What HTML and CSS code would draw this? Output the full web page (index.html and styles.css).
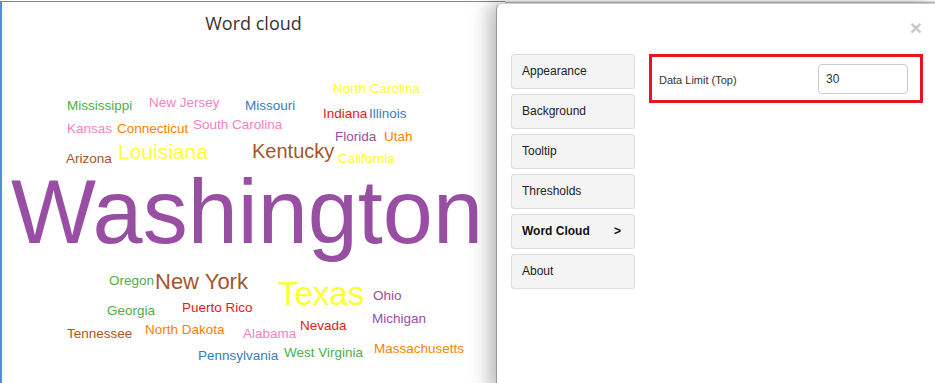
FILE: index.html
```html
<!DOCTYPE html>
<html lang="en">
<head>
    <meta charset="UTF-8">
    <meta name="viewport" content="width=device-width, initial-scale=1.0">
    <title>Word cloud settings</title>
    <link rel="stylesheet" href="styles.css">
</head>
<body>
    <div class="dashboard">
        <div class="chart-widget">
            <div class="chart-title">Word cloud</div>
            <div class="cloud">
                <span class="word yellow" style="left:331px;top:80px">North Carolina</span>
                <span class="word green" style="left:65px;top:97px">Mississippi</span>
                <span class="word pink" style="left:147px;top:94px">New Jersey</span>
                <span class="word blue" style="left:243px;top:97px">Missouri</span>
                <span class="word red" style="left:321px;top:105px">Indiana</span>
                <span class="word blue" style="left:367px;top:105px">Illinois</span>
                <span class="word pink" style="left:65px;top:120px">Kansas</span>
                <span class="word orange" style="left:115px;top:120px">Connecticut</span>
                <span class="word pink" style="left:191px;top:116px">South Carolina</span>
                <span class="word purple" style="left:333px;top:128px">Florida</span>
                <span class="word orange" style="left:382px;top:128px">Utah</span>
                <span class="word brown" style="left:64px;top:150px">Arizona</span>
                <span class="word yellow" style="left:116px;top:139px;font-size:21px">Louisiana</span>
                <span class="word brown" style="left:250px;top:139px;font-size:20px">Kentucky</span>
                <span class="word yellow" style="left:336px;top:150px">California</span>
                <span class="word purple" style="left:9px;top:165px;font-size:90px">Washington</span>
                <span class="word green" style="left:107px;top:272px">Oregon</span>
                <span class="word brown" style="left:153px;top:269px;font-size:22px">New York</span>
                <span class="word yellow" style="left:276px;top:275px;font-size:33px">Texas</span>
                <span class="word purple" style="left:371px;top:287px">Ohio</span>
                <span class="word green" style="left:105px;top:302px">Georgia</span>
                <span class="word red" style="left:180px;top:299px">Puerto Rico</span>
                <span class="word purple" style="left:370px;top:310px">Michigan</span>
                <span class="word brown" style="left:65px;top:325px">Tennessee</span>
                <span class="word orange" style="left:143px;top:321px">North Dakota</span>
                <span class="word pink" style="left:241px;top:325px">Alabama</span>
                <span class="word red" style="left:298px;top:317px">Nevada</span>
                <span class="word blue" style="left:196px;top:347px">Pennsylvania</span>
                <span class="word green" style="left:282px;top:344px">West Virginia</span>
                <span class="word orange" style="left:372px;top:340px">Massachusetts</span>
            </div>
        </div>
        <div class="next-widget">
            <div class="next-axis"></div>
        </div>
    </div>

    <div class="settings-panel">
        <div class="panel-header">
            <button class="close-btn">&times;</button>
        </div>
        <div class="panel-body">
            <div class="menu">
                <button class="menu-item">Appearance</button>
                <button class="menu-item">Background</button>
                <button class="menu-item">Tooltip</button>
                <button class="menu-item">Thresholds</button>
                <button class="menu-item active">Word Cloud <span class="arrow">&gt;</span></button>
                <button class="menu-item">About</button>
            </div>
            <div class="options">
                <div class="option-row">
                    <label class="option-label" for="dataLimit">Data Limit (Top)</label>
                    <input class="option-input" type="text" id="dataLimit" value="30">
                </div>
            </div>
        </div>
    </div>
</body>
</html>
```

FILE: styles.css
```css
body {
    font-family: 'Liberation Sans', Arial, sans-serif;
    margin: 0;
    padding: 0;
    background-color: white;
    overflow: hidden;
    height: 383px;
}

.dashboard {
    display: flex;
    margin-top: 1px;
    height: 382px;
}

.chart-widget {
    position: relative;
    width: 503px;
    border-top: 1px solid #4a90e2;
    border-left: 2px solid #4a90e2;
    background-color: white;
}

.chart-title {
    padding-top: 12px;
    font-family: 'Open Sans', sans-serif;
    font-size: 18px;
    line-height: 18px;
    color: #333;
    text-align: center;
}

.cloud {
    position: absolute;
    top: 0;
    left: 0;
    right: 0;
    bottom: 0;
}

.word {
    position: absolute;
    font-size: 13.5px;
    line-height: 1;
    white-space: nowrap;
}

.purple { color: #984ea3; }
.yellow { color: #ffff33; }
.brown { color: #a65628; }
.pink { color: #f781bf; }
.green { color: #4daf4a; }
.blue { color: #377eb8; }
.red { color: #e41a1c; }
.orange { color: #ff7f00; }

.next-widget {
    flex: 1;
}

.next-axis {
    height: 1px;
    background-color: #e8e8e8;
    border-bottom: 1px solid #bbb;
}

.settings-panel {
    position: absolute;
    top: 3px;
    left: 496px;
    right: 0;
    bottom: -10px;
    background-color: white;
    border-left: 1px solid #999;
    border-top: 1px solid #ccc;
    border-top-left-radius: 6px;
    box-shadow: -6px 0 20px rgba(0,0,0,0.3);
    padding: 0 12px 0 14px;
}

.panel-header {
    height: 50px;
    display: flex;
    justify-content: flex-end;
    align-items: flex-start;
}

.close-btn {
    margin-top: 13px;
    margin-right: 1px;
    padding: 0;
    border: none;
    background: none;
    font-family: 'Liberation Sans', Arial, sans-serif;
    font-size: 21px;
    font-weight: bold;
    line-height: 1;
    color: #c8c8c8;
    cursor: pointer;
}

.panel-body {
    display: flex;
    gap: 14px;
    align-items: flex-start;
}

.menu {
    width: 124px;
    display: flex;
    flex-direction: column;
    gap: 5px;
}

.menu-item {
    display: flex;
    justify-content: space-between;
    align-items: center;
    height: 35px;
    padding: 0 13px 2px 10px;
    font-family: 'Liberation Sans', Arial, sans-serif;
    font-size: 12px;
    color: #222;
    text-align: left;
    background-color: #f4f4f4;
    border: 1px solid #ddd;
    border-radius: 3px;
    cursor: pointer;
}

.menu-item.active {
    font-weight: bold;
    color: #111;
}

.options {
    flex: 1;
}

.option-row {
    display: flex;
    align-items: center;
    padding: 7px 12px 6px 7px;
    border: 3px solid #e8141f;
}

.option-label {
    flex: 1;
    padding-top: 2px;
    font-size: 11px;
    color: #333;
}

.option-input {
    width: 90px;
    height: 30px;
    box-sizing: border-box;
    padding: 0 7px;
    font-family: 'Liberation Sans', Arial, sans-serif;
    font-size: 12px;
    color: #333;
    border: 1px solid #ccc;
    border-radius: 4px;
}
```
